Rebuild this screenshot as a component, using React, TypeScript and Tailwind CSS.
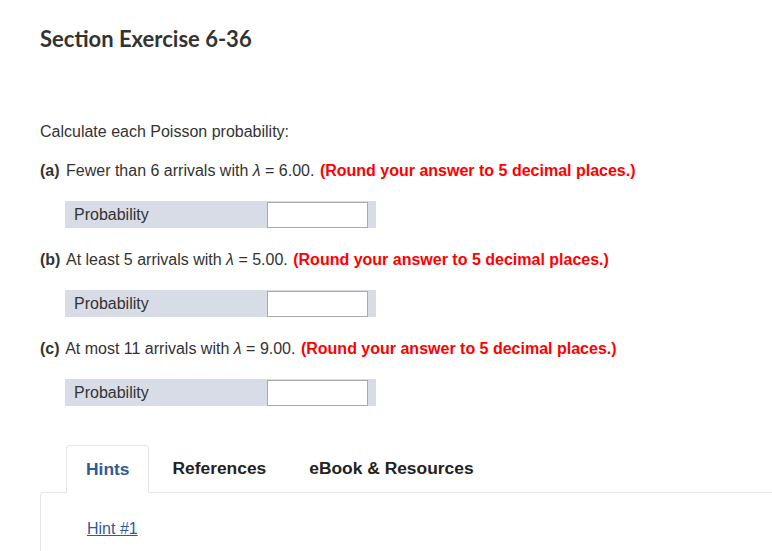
import React from "react";

function ProbRow() {
  return (
    <div className="ml-[25px] mt-[19px] flex h-[27px] w-[311px] items-center bg-[#d8dce6] pl-[9px] pr-[8px]">
      <span className="flex-1 text-[16px] text-[#333]">Probability</span>
      <input
        type="text"
        className="h-[26px] w-[101px] border border-[#aaa] bg-white outline-none"
      />
    </div>
  );
}

function Part({ letter, text, lambda }: { letter: string; text: string; lambda: string }) {
  return (
    <div>
      <p className="text-[16px] leading-[22px] text-[#333]">
        <b className="mr-[2px]">({letter})</b> {text} with <i>λ</i> = {lambda}.{" "}
        <b className="ml-[1px] text-[#ff0000]">(Round your answer to 5 decimal places.)</b>
      </p>
      <ProbRow />
    </div>
  );
}

export default function App() {
  return (
    <div
      className="min-h-[551px] bg-white pl-[40px] pt-[25px]"
      style={{ fontFamily: '"Liberation Sans", Arial, sans-serif' }}
    >
      <h1
        className="text-[22px] font-bold leading-[28px] text-[#333]"
        style={{ fontFamily: 'Lato, "Open Sans", sans-serif' }}
      >
        Section Exercise 6-36
      </h1>
      <p className="mt-[68px] text-[16px] leading-[22px] text-[#333]">Calculate each Poisson probability:</p>
      <div className="mt-[17px] flex flex-col gap-[21px]">
        <Part letter="a" text="Fewer than 6 arrivals" lambda="6.00" />
        <Part letter="b" text="At least 5 arrivals" lambda="5.00" />
        <Part letter="c" text="At most 11 arrivals" lambda="9.00" />
      </div>
      <div className="mt-[39px]">
        <div className="relative z-10 flex pl-[26px]">
          <div className="-mb-px mr-[3px] rounded-t-[4px] border border-b-0 border-[#e6e6e6] bg-white px-[19px] pb-[12px] pt-[11px] text-[17.4px] font-bold leading-[24px] text-[#2f5b96]">
            Hints
          </div>
          <div className="mr-[3px] px-5 pb-[12px] pt-[11px] text-[17.4px] font-bold leading-[24px] text-[#222]">References</div>
          <div className="px-5 pb-[12px] pt-[11px] text-[17.4px] font-bold leading-[24px] text-[#222]">eBook &amp; Resources</div>
        </div>
        <div className="h-[70px] rounded-tl-[4px] border-l border-t border-[#e6e6e6] pl-[46px] pt-[24px]">
          <a href="#" className="text-[16px] text-[#2f5b96] underline">
            Hint #1
          </a>
        </div>
      </div>
    </div>
  );
}
